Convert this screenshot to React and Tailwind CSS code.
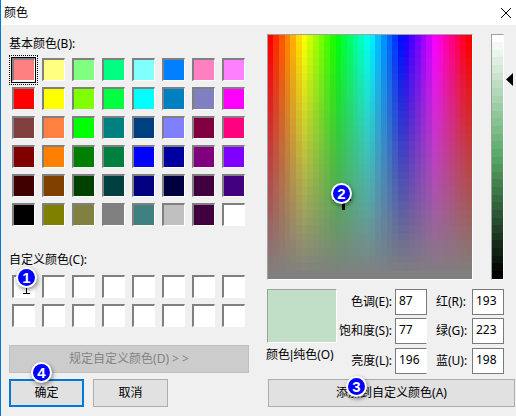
const basicColors = [
  ['#ff8080', '#ffff80', '#80ff80', '#00ff80', '#80ffff', '#0080ff', '#ff80c0', '#ff80ff'],
  ['#ff0000', '#ffff00', '#80ff00', '#00ff40', '#00ffff', '#0080c0', '#8080c0', '#ff00ff'],
  ['#804040', '#ff8040', '#00ff00', '#008080', '#004080', '#8080ff', '#800040', '#ff0080'],
  ['#800000', '#ff8000', '#008000', '#008040', '#0000ff', '#0000a0', '#800080', '#8000ff'],
  ['#400000', '#804000', '#004000', '#004040', '#000080', '#000040', '#400040', '#400080'],
  ['#000000', '#808000', '#808040', '#808080', '#408080', '#c0c0c0', '#400040', '#ffffff'],
].flat();

const customColors = Array(16).fill('#ffffff');

const fields = [
  ['色调(E):', '87', '红(R):', '193'],
  ['饱和度(S):', '77', '绿(G):', '223'],
  ['亮度(L):', '196', '蓝(U):', '198'],
];

const COLS = 36;
const ROWS = 32;
const SPEC_W = 204;
const SPEC_H = 244;

function Swatch({ color }) {
  return (
    <div className="w-[23px] h-[23px] border-2 border-t-[#808080] border-l-[#808080] border-r-white border-b-white border-r-[1px] border-b-[1px]">
      <div className="w-full h-full" style={{ backgroundColor: color }} />
    </div>
  );
}

function Spectrum() {
  const cells = [];
  for (let r = 0; r < ROWS; r++) {
    const y0 = Math.floor((r * SPEC_H) / ROWS);
    const y1 = Math.floor(((r + 1) * SPEC_H) / ROWS);
    for (let c = 0; c < COLS; c++) {
      const x0 = Math.floor((c * SPEC_W) / COLS);
      const x1 = Math.floor(((c + 1) * SPEC_W) / COLS);
      cells.push(
        <rect
          key={`${r}-${c}`}
          x={x0}
          y={y0}
          width={x1 - x0}
          height={y1 - y0}
          fill={`hsl(${(c / (COLS - 1)) * 360} ${100 - (r / (ROWS - 1)) * 100}% 50%)`}
        />
      );
    }
  }
  return (
    <svg width={SPEC_W} height={SPEC_H} viewBox={`0 0 ${SPEC_W} ${SPEC_H}`} shapeRendering="crispEdges" className="block">
      {cells}
    </svg>
  );
}

function LumBar() {
  return (
    <svg width="11" height={SPEC_H} viewBox={`0 0 11 ${SPEC_H}`} shapeRendering="crispEdges" className="block">
      {Array.from({ length: ROWS }, (_, r) => {
        const y0 = Math.floor((r * SPEC_H) / ROWS);
        const y1 = Math.floor(((r + 1) * SPEC_H) / ROWS);
        return <rect key={r} x="0" y={y0} width="11" height={y1 - y0} fill={`hsl(130.5 32% ${100 - (r / (ROWS - 1)) * 100}%)`} />;
      })}
    </svg>
  );
}

function Badge({ n, className }) {
  return (
    <div className={`absolute w-[21px] h-[21px] rounded-full bg-white flex items-center justify-center shadow-[1px_2px_4px_rgba(0,0,0,0.45)] ${className}`}>
      <div className="w-[17px] h-[17px] rounded-full bg-[#0000ff] flex items-center justify-center text-white text-[15px] font-bold leading-none font-['Liberation_Sans',sans-serif]">
        {n}
      </div>
    </div>
  );
}

function Field({ value, open }) {
  return (
    <div className={`w-[32px] h-[26px] bg-white border border-[#7a7a7a] pl-[3px] text-[12px] leading-[21px] ${open ? 'border-r-white' : ''}`}>
      {value}
    </div>
  );
}

export default function App() {
  return (
    <div className="relative w-[516px] h-[416px] bg-[#f0f0f0] border-l border-[#0078d7] overflow-hidden text-[12px] text-black font-['Noto_Sans','Noto_Sans_CJK_SC',sans-serif]">
      {/* title bar */}
      <div className="h-[25px] bg-white flex items-center justify-between pl-[3px] pr-[3px]">
        <span>颜色</span>
        <svg width="10" height="10" viewBox="0 0 10 10" className="mr-[2px]">
          <path d="M0 0L10 10M10 0L0 10" stroke="#000" strokeWidth="1" fill="none" />
        </svg>
      </div>

      <div className="flex pl-[8px]">
        {/* left column */}
        <div className="w-[240px]">
          <div className="mt-[9px] h-[18px] leading-[20px]">基本颜色(B):</div>
          <div className="mt-[6px] ml-[3px] grid grid-cols-[repeat(8,23px)] gap-x-[7px] gap-y-[6px]">
            {basicColors.map((color, i) => (
              <Swatch key={i} color={color} />
            ))}
          </div>

          <div className="mt-[24px] h-[18px] leading-[20px]">自定义颜色(C):</div>
          <div className="mt-[7px] ml-[3px] grid grid-cols-[repeat(8,23px)] gap-x-[7px] gap-y-[6px]">
            {customColors.map((color, i) => (
              <Swatch key={i} color={color} />
            ))}
          </div>

          <div className="mt-[18px] h-[28px] bg-[#cccccc] border border-[#bfbfbf] text-[#838383] flex items-center justify-center">
            规定自定义颜色(D)&nbsp;&gt; &gt;
          </div>

          <div className="mt-[6px] flex gap-[9px]">
            <div className="w-[75px] h-[28px] bg-[#e1e1e1] border-2 border-[#0078d7] flex items-center justify-center">确定</div>
            <div className="w-[75px] h-[28px] bg-[#e1e1e1] border border-[#adadad] flex items-center justify-center">取消</div>
          </div>
        </div>

        {/* right column */}
        <div className="ml-[18px] w-[248px]">
          <div className="mt-[9px] flex">
            <div className="w-[206px] h-[246px] border border-t-[#a0a0a0] border-l-[#a0a0a0] border-r-white border-b-white">
              <Spectrum />
            </div>
            <div className="ml-[18px] w-[13px] h-[246px] border border-t-[#a0a0a0] border-l-[#a0a0a0] border-r-white border-b-white">
              <LumBar />
            </div>
            <svg width="7" height="13" viewBox="0 0 7 13" className="ml-[2px] mt-[39px]">
              <path d="M7 0V13L0 6.5Z" fill="#000" />
            </svg>
          </div>

          <div className="mt-[9px] flex">
            <div className="w-[72px]">
              <div className="w-[70px] h-[54px] bg-[#c1dfc6] border border-t-[#a0a0a0] border-l-[#a0a0a0] border-r-white border-b-white" />
              <div className="mt-[3px] -ml-[1px] h-[18px] leading-[18px] whitespace-nowrap">
                颜色<span className="font-['Liberation_Sans',sans-serif]">|</span>纯色(O)
              </div>
            </div>
            <div className="flex flex-col gap-y-[3px]">
              {fields.map(([l1, v1, l2, v2], i) => (
                <div key={l1} className={`flex items-center ${i === 2 ? 'mt-[1px]' : ''}`}>
                  <span className="w-[53px] text-right whitespace-nowrap">{l1}</span>
                  <div className="ml-[3px]">
                    <Field value={v1} open={i > 0} />
                  </div>
                  <span className="ml-[9px] w-[34px] whitespace-nowrap">{l2}</span>
                  <div className="ml-[2px]">
                    <Field value={v2} />
                  </div>
                </div>
              ))}
            </div>
          </div>

          <div className="mt-[5px] ml-[1px] w-[247px] h-[28px] bg-[#e1e1e1] border border-[#adadad] flex items-center justify-center">
            添加到自定义颜色(A)
          </div>
        </div>
      </div>

      {/* focus rectangle on the selected swatch */}
      <div className="absolute left-[8px] top-[55px] w-[29px] h-[30px] border border-dotted border-black" />
      <div className="absolute left-[10px] top-[57px] w-[25px] h-[26px] border border-black" />

      {/* colour picker crosshair */}
      <svg width="18" height="20" viewBox="0 0 18 20" className="absolute left-[332px] top-[190px]">
        <path d="M9 0h3v20h-3zM0 8h18v3H0z" fill="#000" />
      </svg>

      {/* mouse cursor under badge 1 */}
      <svg width="9" height="8" viewBox="0 0 9 8" className="absolute left-[21px] top-[286px]">
        <path d="M4.5 0V7M1 7.5H8" stroke="#000" strokeWidth="1" fill="none" />
      </svg>

      <Badge n="1" className="left-[15px] top-[267px]" />
      <Badge n="2" className="left-[330px] top-[183px]" />
      <Badge n="3" className="left-[345px] top-[376px]" />
      <Badge n="4" className="left-[30px] top-[362px]" />
    </div>
  );
}
